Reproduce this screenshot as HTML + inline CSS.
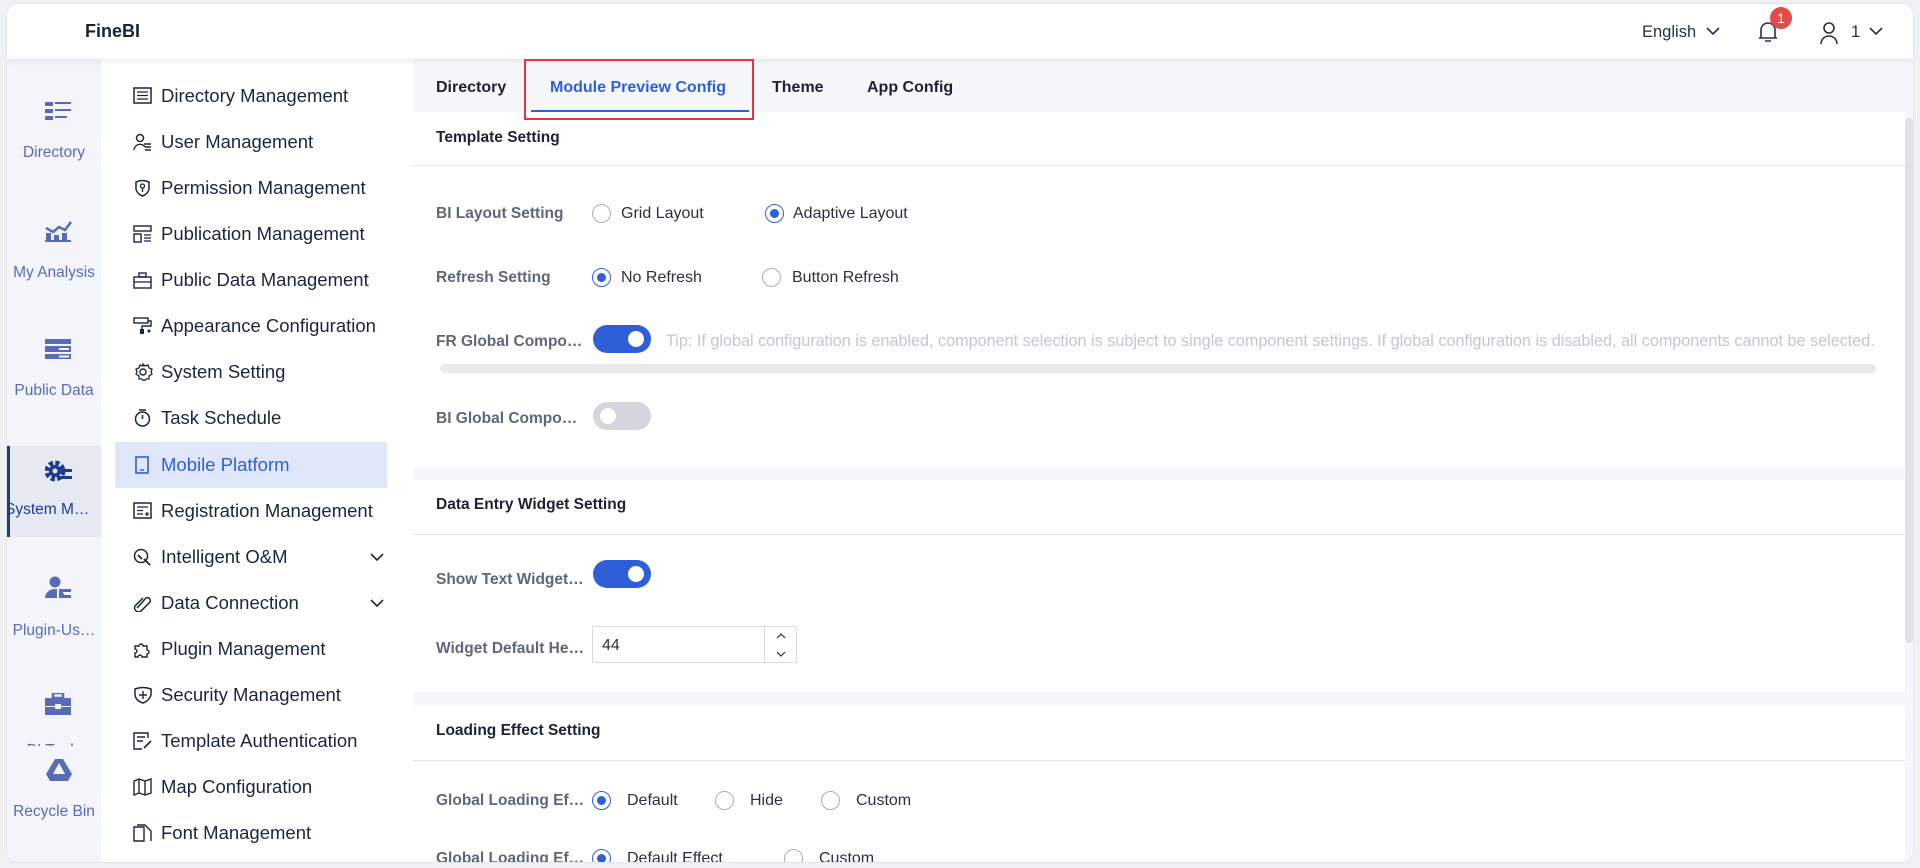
<!DOCTYPE html>
<html><head><meta charset="utf-8"><style>
*{box-sizing:border-box;margin:0;padding:0}
body{width:1920px;height:868px;background:#f0f1f3;font-family:"Liberation Sans",Arial,sans-serif;position:relative;overflow:hidden}
.frame{position:absolute;left:6px;top:3px;width:1908px;height:860px;background:#fff;border-radius:12px;overflow:hidden;border:1px solid #e4e5e8}
.a{position:absolute}
.hdr{left:0;top:0;width:1908px;height:55px;background:#fff;box-shadow:0 2px 6px rgba(0,0,0,.08);z-index:3}
.rail{left:0;top:55px;width:94px;height:805px;background:#f3f5fb}
.ri{position:absolute;left:0;width:94px;text-align:center;color:#5a6bb5;font-size:15.5px}
.sub{left:94px;top:55px;width:318px;height:805px;background:#fff}
.mi{position:absolute;left:0;width:300px;height:46px;font-size:18.5px;color:#1c2540;line-height:46px}
.mi span{position:absolute;left:60px}
.mi svg{position:absolute;left:32px;top:14px}
.main{left:406px;top:55px;width:1502px;height:805px;background:#f6f7fa}
.tab{position:absolute;top:20px;font-size:16px;font-weight:bold;color:#1c2233}
.panel{position:absolute;left:0;width:1492px;background:#fff}
.sh{position:absolute;left:23px;font-size:15.5px;font-weight:bold;color:#1c2233}
.div{position:absolute;left:0;width:1492px;height:1px;background:#e3e5ea}
.lb{position:absolute;left:23px;font-size:15.5px;font-weight:bold;color:#5f6679}
.rd{position:absolute;width:19px;height:19px;border-radius:50%;border:1px solid #a8adb8;background:#fff}
.rd.on{border-color:#2f5fd8}
.rd.on:after{content:"";position:absolute;left:4px;top:4px;width:9px;height:9px;border-radius:50%;background:#2f5fd8}
.rt{position:absolute;font-size:16px;color:#2a3040}
.tg{position:absolute;width:58px;height:28px;border-radius:14px;background:#2f5fd8}
.tg:after{content:"";position:absolute;right:7px;top:6px;width:16px;height:16px;border-radius:50%;background:#fff}
.tg.off{background:#d3d6dd}
.tg.off:after{left:7px;right:auto}
</style></head><body>
<div class="frame">
<div class="a hdr">
 <div class="a" style="left:78px;top:17px;font-size:18px;font-weight:bold;color:#1a2238">FineBI</div>
 <div class="a" style="left:1635px;top:19px;font-size:16.5px;color:#263048">English</div>
 <svg class="a" style="left:1698px;top:22px" width="16" height="10"><path d="M2 2l6 6 6-6" fill="none" stroke="#263048" stroke-width="1.6"/></svg>
 <svg class="a" style="left:1750px;top:16px" width="22" height="24"><path d="M4 18V10a7 7 0 0 1 14 0v8M2 18h18M8 21h6" fill="none" stroke="#263048" stroke-width="1.6"/></svg>
 <div class="a" style="left:1763px;top:3px;width:22px;height:22px;border-radius:50%;background:#e24b4b;color:#fff;font-size:14px;text-align:center;line-height:22px">1</div>
 <svg class="a" style="left:1812px;top:17px" width="20" height="24"><circle cx="10" cy="7" r="5" fill="none" stroke="#263048" stroke-width="1.6"/><path d="M2 23a8 8 0 0 1 16 0" fill="none" stroke="#263048" stroke-width="1.6"/></svg>
 <div class="a" style="left:1844px;top:19px;font-size:16.5px;color:#263048">1</div>
 <svg class="a" style="left:1861px;top:22px" width="16" height="10"><path d="M2 2l6 6 6-6" fill="none" stroke="#263048" stroke-width="1.6"/></svg>
</div>
<div class="a rail">
 <svg class="a" style="left:38px;top:43px" width="27" height="20"><rect x="0" y="0" width="8" height="4" fill="#5a6bb5"/><rect x="10" y="0" width="16" height="2" fill="#5a6bb5"/><rect x="0" y="7" width="8" height="4" fill="#5a6bb5"/><rect x="10" y="7" width="16" height="2" fill="#5a6bb5"/><rect x="0" y="14" width="8" height="4" fill="#5a6bb5"/><rect x="10" y="14" width="12" height="2" fill="#5a6bb5"/></svg>
 <div class="ri" style="top:85px">Directory</div>
 <svg class="a" style="left:38px;top:161px" width="27" height="22"><path d="M1 8l7 4 6-5 6 3 6-8" fill="none" stroke="#5a6bb5" stroke-width="2.5"/><rect x="1" y="13" width="5" height="8" fill="#5a6bb5"/><rect x="9" y="15" width="5" height="6" fill="#5a6bb5"/><rect x="17" y="13" width="5" height="8" fill="#5a6bb5"/><rect x="0" y="20" width="26" height="2" fill="#5a6bb5"/></svg>
 <div class="ri" style="top:205px">My Analysis</div>
 <svg class="a" style="left:38px;top:280px" width="26" height="20"><rect x="0" y="0" width="26" height="5" fill="#5a6bb5"/><rect x="0" y="7" width="26" height="6" fill="#5a6bb5"/><rect x="0" y="15" width="26" height="5" fill="#5a6bb5"/><rect x="14" y="9" width="10" height="2" fill="#f3f5fb"/><rect x="14" y="16.5" width="10" height="2" fill="#f3f5fb"/></svg>
 <div class="ri" style="top:323px">Public Data</div>
 <div class="a" style="left:0;top:387px;width:94px;height:91px;background:#e6e9f2"></div>
 <div class="a" style="left:0;top:387px;width:3px;height:91px;background:#1f3b8f"></div>
 <svg class="a" style="left:38px;top:401px" width="28" height="22"><circle cx="10" cy="11" r="8" fill="none" stroke="#1f3b8f" stroke-width="5" stroke-dasharray="4 2.3"/><circle cx="10" cy="11" r="6" fill="#1f3b8f"/><circle cx="10" cy="11" r="2.5" fill="#e6e9f2"/><rect x="15" y="9" width="12" height="3" fill="#1f3b8f"/><rect x="15" y="16" width="12" height="3" fill="#1f3b8f"/></svg>
 <div class="ri" style="top:442px;color:#1f3b8f;white-space:nowrap;overflow:hidden;text-align:left;left:-2px">System M…</div>
 <svg class="a" style="left:38px;top:517px" width="26" height="22"><circle cx="10" cy="6" r="5.5" fill="#5a6bb5"/><path d="M0 22a10 9 0 0 1 20 0z" fill="#5a6bb5"/><rect x="13" y="13" width="13" height="3" fill="#5a6bb5"/><rect x="13" y="19" width="13" height="3" fill="#5a6bb5"/><rect x="12" y="12" width="2" height="11" fill="#f3f5fb"/></svg>
 <div class="ri" style="top:563px;white-space:nowrap">Plugin-Us…</div>
 <svg class="a" style="left:38px;top:634px" width="26" height="22"><rect x="8" y="0" width="10" height="5" fill="none" stroke="#5a6bb5" stroke-width="2.5"/><rect x="0" y="5" width="26" height="8" fill="#5a6bb5"/><rect x="0" y="14" width="26" height="8" fill="#5a6bb5"/><rect x="10" y="11" width="6" height="5" fill="#f3f5fb"/></svg>
 <div class="a" style="left:0;top:683px;width:94px;height:4px;overflow:hidden"><div class="ri" style="top:0">BI Tools</div></div>
 <svg class="a" style="left:39px;top:700px" width="26" height="22"><path d="M9 0h8l9 15-4 7H4l-4-7z" fill="#5a6bb5"/><path d="M13 4l-6 11h12z" fill="#f3f5fb"/></svg>
 <div class="ri" style="top:744px">Recycle Bin</div>
</div>
<div class="a sub" style="top:52px">
 <div class="mi" style="top:17px"><svg width="20" height="18"><rect x="1" y="1" width="17" height="15" fill="none" stroke="#1c2540" stroke-width="1.5"/><path d="M4 5h11M4 8.5h11M4 12h11" stroke="#1c2540" stroke-width="1.3"/></svg><span>Directory Management</span></div>
 <div class="mi" style="top:63px"><svg width="20" height="18"><circle cx="7" cy="5" r="3.5" fill="none" stroke="#1c2540" stroke-width="1.5"/><path d="M1 17a6 6 0 0 1 11-3M11 11h7M12 14h6M12 17h6" fill="none" stroke="#1c2540" stroke-width="1.4"/></svg><span>User Management</span></div>
 <div class="mi" style="top:109px"><svg width="20" height="18"><path d="M3 3q6-3 13 0v7q-1 5-6.5 7Q4 15 3 10z" fill="none" stroke="#1c2540" stroke-width="1.5"/><circle cx="9.5" cy="7" r="2" fill="none" stroke="#1c2540" stroke-width="1.3"/><path d="M9.5 9v4" stroke="#1c2540" stroke-width="1.3"/></svg><span>Permission Management</span></div>
 <div class="mi" style="top:155px"><svg width="20" height="18"><rect x="1" y="1" width="17" height="5" fill="none" stroke="#1c2540" stroke-width="1.4"/><rect x="1" y="9" width="7" height="8" fill="none" stroke="#1c2540" stroke-width="1.4"/><path d="M11 10h7M11 13h7M11 16h7" stroke="#1c2540" stroke-width="1.3"/></svg><span>Publication Management</span></div>
 <div class="mi" style="top:201px"><svg width="20" height="18"><rect x="1" y="6" width="17" height="11" fill="none" stroke="#1c2540" stroke-width="1.4"/><rect x="6" y="2" width="7" height="4" fill="none" stroke="#1c2540" stroke-width="1.4"/><path d="M1 11h17" stroke="#1c2540" stroke-width="1.3"/></svg><span>Public Data Management</span></div>
 <div class="mi" style="top:247px"><svg width="20" height="18"><rect x="1" y="1" width="14" height="5" fill="none" stroke="#1c2540" stroke-width="1.4"/><path d="M15 4h3v5H9v3" fill="none" stroke="#1c2540" stroke-width="1.4"/><rect x="7" y="12" width="4" height="5" fill="#1c2540"/><circle cx="16" cy="14" r="1.5" fill="#1c2540"/></svg><span>Appearance Configuration</span></div>
 <div class="mi" style="top:293px"><svg width="20" height="18"><path d="M10 1l2 2 3-1 1 3 3 1-1 3 1 2-3 2 0 3-3 0-2 2-2-2-3 0 0-3-3-2 1-2-1-3 3-1 1-3 3 1z" fill="none" stroke="#1c2540" stroke-width="1.3"/><circle cx="10" cy="9" r="3" fill="none" stroke="#1c2540" stroke-width="1.4"/></svg><span>System Setting</span></div>
 <div class="mi" style="top:339px"><svg width="20" height="18"><circle cx="9.5" cy="10" r="7" fill="none" stroke="#1c2540" stroke-width="1.5"/><path d="M6 1h7M9.5 10V6" stroke="#1c2540" stroke-width="1.5"/></svg><span>Task Schedule</span></div>
 <div class="a" style="left:14px;top:386px;width:272px;height:46px;background:#e1e7fb"></div>
 <div class="mi" style="top:386px;color:#2f5fd8"><svg width="20" height="18"><rect x="3" y="1" width="12" height="16" fill="none" stroke="#2f5fd8" stroke-width="1.6"/><path d="M7 14h4" stroke="#2f5fd8" stroke-width="1.5"/></svg><span>Mobile Platform</span></div>
 <div class="mi" style="top:432px"><svg width="20" height="18"><rect x="1" y="1" width="17" height="15" fill="none" stroke="#1c2540" stroke-width="1.5"/><path d="M4 5h11M4 8.5h6M4 12h6M12 12h4M14 10v4" stroke="#1c2540" stroke-width="1.3"/></svg><span>Registration Management</span></div>
 <div class="mi" style="top:478px"><svg width="20" height="18"><circle cx="8" cy="8" r="6.5" fill="none" stroke="#1c2540" stroke-width="1.5"/><path d="M5 7l4 4M11 11l6 6" stroke="#1c2540" stroke-width="1.8"/></svg><span>Intelligent O&amp;M</span><svg style="left:268px;top:18px" width="16" height="10"><path d="M2 2l6 6 6-6" fill="none" stroke="#1c2540" stroke-width="1.6"/></svg></div>
 <div class="mi" style="top:524px"><svg width="20" height="18"><path d="M4 14L13 4a3 3 0 0 1 4 4L8 17a4 4 0 0 1-6-5l8-8" fill="none" stroke="#1c2540" stroke-width="1.5"/></svg><span>Data Connection</span><svg style="left:268px;top:18px" width="16" height="10"><path d="M2 2l6 6 6-6" fill="none" stroke="#1c2540" stroke-width="1.6"/></svg></div>
 <div class="mi" style="top:570px"><svg width="20" height="18"><path d="M2 6h4a2 2 0 1 1 4 0h4v4a2 2 0 1 1 0 4v3H9a2 2 0 1 0-4 0H2v-4a2 2 0 1 0 0-4z" fill="none" stroke="#1c2540" stroke-width="1.4"/></svg><span>Plugin Management</span></div>
 <div class="mi" style="top:616px"><svg width="20" height="18"><path d="M2 3q8-3 16 0v6q-2 6-8 8Q3 15 2 9z" fill="none" stroke="#1c2540" stroke-width="1.5"/><path d="M10 5v8M6 9h8" stroke="#1c2540" stroke-width="1.4"/></svg><span>Security Management</span></div>
 <div class="mi" style="top:662px"><svg width="20" height="18"><path d="M15 6V1H1v16h8M4 5h8M4 9h6" fill="none" stroke="#1c2540" stroke-width="1.4"/><path d="M11 16l7-7" stroke="#1c2540" stroke-width="1.6"/></svg><span>Template Authentication</span></div>
 <div class="mi" style="top:708px"><svg width="20" height="18"><path d="M1 3l5-2 6 2 6-2v14l-6 2-6-2-5 2z M6 1v14M12 3v14" fill="none" stroke="#1c2540" stroke-width="1.4"/></svg><span>Map Configuration</span></div>
 <div class="mi" style="top:754px"><svg width="20" height="18"><path d="M1 3h10v14H1z M4 1h8l6 6v10" fill="none" stroke="#1c2540" stroke-width="1.4"/></svg><span>Font Management</span></div>
 <div class="a" style="left:318px;top:397px;width:6px;height:20px;background:radial-gradient(circle,#9aa0aa 1px,transparent 1.3px) 0 0/4px 5px"></div>
</div>
<div class="a main">
 <div class="tab" style="left:23px">Directory</div>
 <div class="tab" style="left:137px;color:#2f5fd8">Module Preview Config</div>
 <div class="a" style="left:118px;top:51px;width:218px;height:3px;background:#2f5fd8"></div>
 <div class="tab" style="left:359px">Theme</div>
 <div class="tab" style="left:454px">App Config</div>

 <div class="panel" style="top:53px;height:355px">
  <div class="sh" style="top:17px">Template Setting</div>
  <div class="div" style="top:53px"></div>
  <div class="lb" style="top:93px">BI Layout Setting</div>
  <div class="rd" style="left:179px;top:92px"></div><div class="rt" style="left:208px;top:93px">Grid Layout</div>
  <div class="rd on" style="left:352px;top:92px"></div><div class="rt" style="left:380px;top:93px">Adaptive Layout</div>
  <div class="lb" style="top:157px">Refresh Setting</div>
  <div class="rd on" style="left:179px;top:156px"></div><div class="rt" style="left:208px;top:157px">No Refresh</div>
  <div class="rd" style="left:349px;top:156px"></div><div class="rt" style="left:379px;top:157px">Button Refresh</div>
  <div class="lb" style="top:221px">FR Global Compo…</div>
  <div class="tg" style="left:180px;top:213px"></div>
  <div class="rt" style="left:253px;top:220px;font-size:16.2px;color:#c3c7cf;white-space:nowrap">Tip: If global configuration is enabled, component selection is subject to single component settings. If global configuration is disabled, all components cannot be selected.</div>
  <div class="a" style="left:27px;top:252px;width:1436px;height:9px;border-radius:5px;background:#e9eaee"></div>
  <div class="lb" style="top:298px">BI Global Compo…</div>
  <div class="tg off" style="left:180px;top:290px"></div>
 </div>

 <div class="panel" style="top:421px;height:212px">
  <div class="sh" style="top:16px">Data Entry Widget Setting</div>
  <div class="div" style="top:54px"></div>
  <div class="lb" style="top:91px">Show Text Widget…</div>
  <div class="tg" style="left:180px;top:80px"></div>
  <div class="lb" style="top:160px">Widget Default He…</div>
  <div class="a" style="left:179px;top:146px;width:205px;height:37px;border:1px solid #d8dbe1;border-radius:2px"></div>
  <div class="a" style="left:351px;top:146px;width:1px;height:37px;background:#d8dbe1"></div>
  <div class="rt" style="left:189px;top:157px">44</div>
  <svg class="a" style="left:361px;top:151px" width="14" height="28"><path d="M3 7l4-4 4 4M3 21l4 4 4-4" fill="none" stroke="#333" stroke-width="1.2"/></svg>
 </div>

 <div class="panel" style="top:647px;height:160px">
  <div class="sh" style="top:16px">Loading Effect Setting</div>
  <div class="div" style="top:54px"></div>
  <div class="lb" style="top:86px">Global Loading Ef…</div>
  <div class="rd on" style="left:179px;top:85px"></div><div class="rt" style="left:214px;top:86px">Default</div>
  <div class="rd" style="left:302px;top:85px"></div><div class="rt" style="left:337px;top:86px">Hide</div>
  <div class="rd" style="left:408px;top:85px"></div><div class="rt" style="left:443px;top:86px">Custom</div>
  <div class="lb" style="top:144px">Global Loading Ef…</div>
  <div class="rd on" style="left:179px;top:143px"></div><div class="rt" style="left:214px;top:144px">Default Effect</div>
  <div class="rd" style="left:371px;top:143px"></div><div class="rt" style="left:406px;top:144px">Custom</div>
 </div>
 <div class="a" style="left:1492px;top:59px;width:8px;height:525px;border-radius:4px;background:#e1e2e7"></div>
 <div class="a" style="left:111px;top:0;width:230px;height:61px;border:2px solid #e8353b;z-index:4"></div>
</div>
</div>
</body></html>
